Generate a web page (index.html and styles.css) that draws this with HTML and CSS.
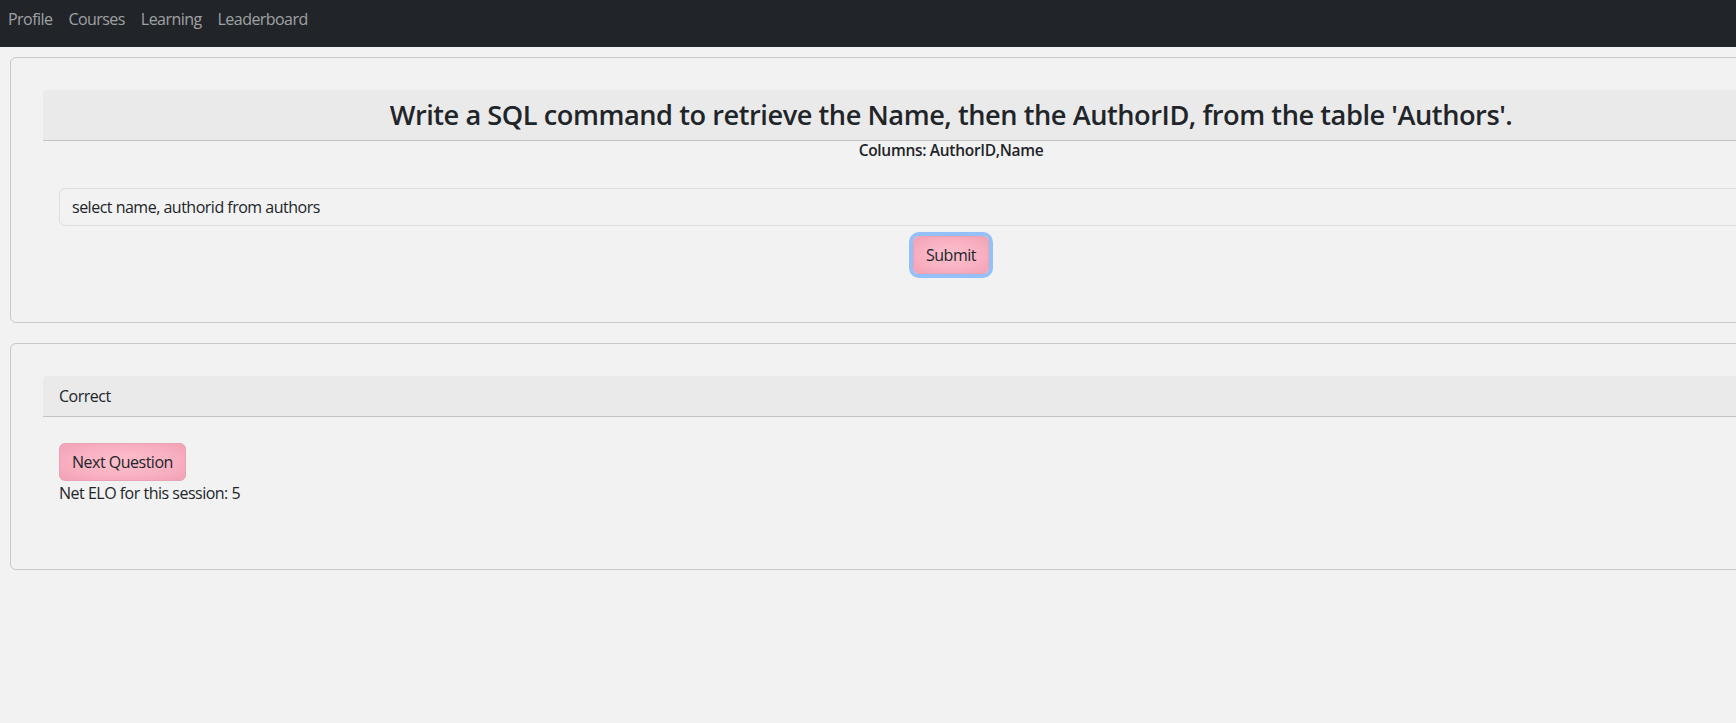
FILE: index.html
```html
<!DOCTYPE html>
<html lang="en">
<head>
<meta charset="utf-8">
<title>SQL Practice</title>
<link rel="stylesheet" href="styles.css">
</head>
<body>
<nav class="navbar">
  <a class="nav-link" href="#">Profile</a>
  <a class="nav-link" href="#">Courses</a>
  <a class="nav-link" href="#">Learning</a>
  <a class="nav-link" href="#">Leaderboard</a>
</nav>
<main class="page">
  <section class="panel">
    <div class="card">
      <div class="card-header">
        <h3 class="question">Write a SQL command to retrieve the Name, then the AuthorID, from the table 'Authors'.</h3>
      </div>
      <h6 class="columns">Columns: AuthorID,Name</h6>
      <div class="card-body">
        <input class="form-control" type="text" value="select name, authorid from authors">
        <div class="actions">
          <button class="btn btn-pink btn-focus" type="button">Submit</button>
        </div>
      </div>
    </div>
  </section>
  <section class="panel">
    <div class="card">
      <div class="card-header result">Correct</div>
      <div class="card-body">
        <div class="actions-left">
          <button class="btn btn-pink" type="button">Next Question</button>
        </div>
        <p class="elo">Net ELO for this session: 5</p>
      </div>
    </div>
  </section>
</main>
</body>
</html>
```

FILE: styles.css
```css
html, body {
  margin: 0;
  padding: 0;
  overflow: hidden;
}

body {
  background: #f2f2f2;
  color: #212529;
  font-family: "Open Sans", "Noto Sans", "Liberation Sans", sans-serif;
  font-size: 16px;
  line-height: 24px;
  letter-spacing: -0.5px;
  height: 723px;
}

.navbar {
  background: #212529;
  height: 47px;
  box-sizing: border-box;
  padding-top: 7px;
  display: flex;
}

.nav-link {
  color: rgba(255, 255, 255, 0.58);
  text-decoration: none;
  padding: 0 8px;
  line-height: 24px;
  letter-spacing: -0.55px;
}

.page {
  display: flex;
  flex-direction: column;
  gap: 20px;
  padding: 10px 0 0 10px;
}

.panel {
  width: 1882px;
  flex: none;
  box-sizing: border-box;
  border: 1px solid #c9c9c9;
  border-radius: 6px;
  padding: 32px;
}

.card {
  display: flex;
  flex-direction: column;
}

.card-header {
  background: #eaeaea;
  border-bottom: 1px solid #c4c4c4;
  border-radius: 4px 4px 0 0;
  padding: 8px 16px;
}

.question {
  margin: 0;
  text-align: center;
  font-size: 27.2px;
  font-weight: 600;
  line-height: 34px;
  letter-spacing: -0.45px;
}

.result {
  line-height: 24px;
}

.columns {
  margin: 0 0 12px;
  text-align: center;
  font-size: 15.5px;
  font-weight: 600;
  line-height: 19px;
  letter-spacing: -0.3px;
}

.card-body {
  padding: 16px;
}

.form-control {
  display: block;
  width: 100%;
  box-sizing: border-box;
  height: 38px;
  margin: 0;
  padding: 6px 12px;
  font: inherit;
  letter-spacing: inherit;
  color: #212529;
  background: #f2f2f2;
  border: 1px solid #dedede;
  border-radius: 6px;
}

.actions {
  display: flex;
  justify-content: center;
  margin-top: 10px;
}

.actions-left {
  display: flex;
  margin-top: 10px;
}

.btn {
  font: inherit;
  letter-spacing: inherit;
  color: #212529;
  height: 38px;
  padding: 6px 12px;
  border-radius: 6px;
  border: 1px solid #e9a3b6;
  background: radial-gradient(ellipse at center, #ffc0cc 0%, #f8b0c1 60%, #f2a1b5 100%);
  cursor: pointer;
}

.btn-focus {
  box-shadow: 0 0 0 4px #94bff7;
}

.elo {
  margin: 0 0 16px;
}
```
